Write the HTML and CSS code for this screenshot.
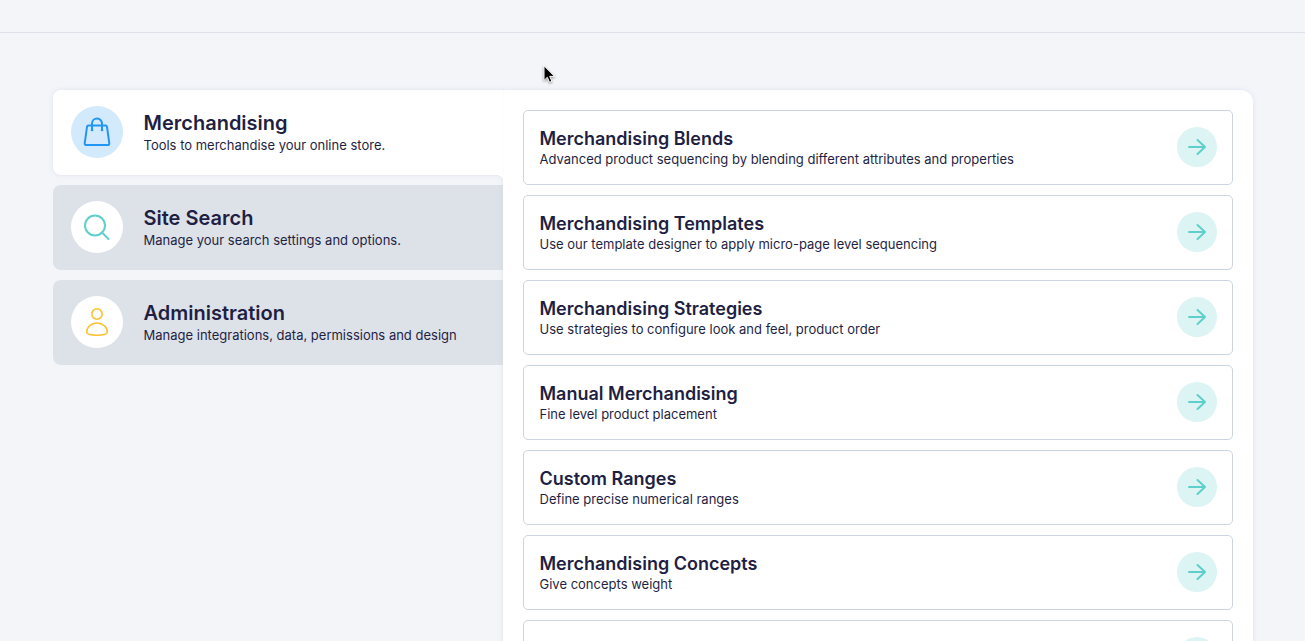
FILE: index.html
```html
<!DOCTYPE html>
<html lang="en">
<head>
  <meta charset="UTF-8">
  <meta name="viewport" content="width=device-width, initial-scale=1.0">
  <title>Merchandising</title>
  <link rel="stylesheet" href="styles.css">
</head>
<body>
  <svg class="sprite" aria-hidden="true">
    <symbol id="arrow" viewBox="0 0 20 20">
      <path d="M2 10h16M10.500 3l7.500 7-7.500 7" />
    </symbol>
  </svg>

  <header class="topbar"></header>

  <main class="container">
    <nav class="tabs">
      <button type="button" class="tab active">
        <span class="tab-icon blue">
          <svg viewBox="0 0 52 52">
            <path d="M17.500 19.500h17a1.500 1.500 0 0 1 1.500 1.300l2.300 16.500a1.500 1.500 0 0 1-1.500 1.700h-21.600a1.500 1.500 0 0 1-1.500-1.700l2.300-16.500a1.500 1.500 0 0 1 1.500-1.300z" />
            <path d="M21 24v-6.500a5 5 0 0 1 10 0v6.500" />
            <circle class="dot" cx="21" cy="24" r="1.300" />
            <circle class="dot" cx="31" cy="24" r="1.300" />
          </svg>
        </span>
        <span class="text">
          <span class="tab-title">Merchandising</span>
          <span class="description">Tools to merchandise your online store.</span>
        </span>
      </button>
      <button type="button" class="tab">
        <span class="tab-icon teal">
          <svg viewBox="0 0 52 52">
            <circle cx="24" cy="24.500" r="10" />
            <path d="M31 31.500l6.500 6.500" />
          </svg>
        </span>
        <span class="text">
          <span class="tab-title">Site Search</span>
          <span class="description">Manage your search settings and options.</span>
        </span>
      </button>
      <button type="button" class="tab">
        <span class="tab-icon yellow">
          <svg viewBox="0 0 52 52">
            <circle cx="26" cy="18" r="5.200" />
            <path d="M26 27c-6 0-10.300 4.200-10.300 9.300 0 2 4 2.900 10.300 2.900s10.300-.9 10.300-2.900c0-5.100-4.300-9.300-10.300-9.300z" />
          </svg>
        </span>
        <span class="text">
          <span class="tab-title">Administration</span>
          <span class="description">Manage integrations, data, permissions and design</span>
        </span>
      </button>
    </nav>

    <section class="panel">
      <a class="card" href="#">
        <span class="text">
          <span class="card-title">Merchandising Blends</span>
          <span class="description">Advanced product sequencing by blending different attributes and properties</span>
        </span>
        <span class="go"><svg><use href="#arrow" /></svg></span>
      </a>
      <a class="card" href="#">
        <span class="text">
          <span class="card-title">Merchandising Templates</span>
          <span class="description">Use our template designer to apply micro-page level sequencing</span>
        </span>
        <span class="go"><svg><use href="#arrow" /></svg></span>
      </a>
      <a class="card" href="#">
        <span class="text">
          <span class="card-title">Merchandising Strategies</span>
          <span class="description">Use strategies to configure look and feel, product order</span>
        </span>
        <span class="go"><svg><use href="#arrow" /></svg></span>
      </a>
      <a class="card" href="#">
        <span class="text">
          <span class="card-title">Manual Merchandising</span>
          <span class="description">Fine level product placement</span>
        </span>
        <span class="go"><svg><use href="#arrow" /></svg></span>
      </a>
      <a class="card" href="#">
        <span class="text">
          <span class="card-title">Custom Ranges</span>
          <span class="description">Define precise numerical ranges</span>
        </span>
        <span class="go"><svg><use href="#arrow" /></svg></span>
      </a>
      <a class="card" href="#">
        <span class="text">
          <span class="card-title">Merchandising Concepts</span>
          <span class="description">Give concepts weight</span>
        </span>
        <span class="go"><svg><use href="#arrow" /></svg></span>
      </a>
      <a class="card" href="#">
        <span class="text"></span>
        <span class="go"><svg><use href="#arrow" /></svg></span>
      </a>
    </section>
  </main>

  <svg class="cursor" viewBox="0 0 12 19" aria-hidden="true">
    <path d="M1 1v14.500l3.300-3.200 2.200 5 2.400-1-2.200-4.900h4.600z" />
  </svg>
</body>
</html>
```

FILE: styles.css
```css
* {
  box-sizing: border-box;
}

body {
  margin: 0;
  height: 100vh;
  overflow: hidden;
  background-color: #f3f5f9;
  color: #1f1f43;
  font-family: Inter, sans-serif;
}

.sprite {
  display: none;
}

svg {
  fill: none;
  stroke: currentColor;
  stroke-width: 2;
  stroke-linecap: round;
  stroke-linejoin: round;
}

.topbar {
  height: 33px;
  border-bottom: 1px solid #dde1e9;
}

.container {
  display: grid;
  grid-template-columns: 3fr 5fr;
  max-width: 1200px;
  margin: 57px auto 0;
}

/* Left tabs */
.tabs {
  display: flex;
  flex-direction: column;
  gap: 10px;
}

.tab {
  display: flex;
  align-items: center;
  gap: 21px;
  height: 85px;
  padding: 16px 18px 17px;
  border: none;
  border-radius: 8px 0 0 8px;
  background-color: #dde2e9;
  color: inherit;
  font-family: inherit;
  text-align: left;
  cursor: pointer;
}

/* overlaps the panel by 1px so no seam shows between them */
.tab.active {
  position: relative;
  z-index: 1;
  margin-right: -1px;
  background-color: #fff;
  box-shadow: 0 0 4px rgba(200, 210, 225, 0.5);
  clip-path: inset(-4px 0 -8px -4px);
}

/* rounded inner corner where the active tab joins the panel */
.tab.active::after {
  content: "";
  position: absolute;
  top: 100%;
  right: 0;
  width: 8px;
  height: 8px;
  background: radial-gradient(circle at 0 100%, transparent 8px, #fff 8px);
}

.tab-icon {
  width: 52px;
  height: 52px;
  border-radius: 50%;
  background-color: #fff;
}

.tab-icon svg {
  display: block;
}

.blue {
  background-color: #d3e9fc;
  color: #2196f3;
}

.blue .dot {
  fill: currentColor;
  stroke: none;
}

.teal {
  color: #5fcfcb;
}

.yellow {
  color: #fdc02f;
}

.yellow svg {
  stroke-width: 1.6;
}

.text {
  display: flex;
  flex-direction: column;
}

.tab-title {
  font-size: 20px;
  font-weight: 600;
  line-height: 26px;
}

.description {
  font-size: 13px;
  line-height: 18px;
}

/* Right panel */
.panel {
  display: flex;
  flex-direction: column;
  gap: 10px;
  padding: 20px;
  background-color: #fff;
  border-radius: 0 12px 0 0;
  box-shadow: 0 0 4px rgba(200, 210, 225, 0.5);
}

.card {
  display: flex;
  align-items: center;
  justify-content: space-between;
  height: 75px;
  padding: 16px 15px 17px 16px;
  border: 1px solid #cbd5e1;
  border-radius: 5px;
  color: inherit;
  text-decoration: none;
}

.card .text {
  padding-top: 2px;
}

.card-title {
  font-size: 18px;
  font-weight: 600;
  line-height: 22px;
}

.go {
  display: flex;
  align-items: center;
  justify-content: center;
  width: 40px;
  height: 40px;
  border-radius: 50%;
  background-color: #dcf4f3;
  color: #5fcfcb;
}

.go svg {
  width: 20px;
  height: 20px;
}

/* Mouse pointer over the page */
.cursor {
  position: absolute;
  top: 65px;
  left: 543px;
  width: 12px;
  height: 19px;
  overflow: visible;
  fill: #000;
  stroke: #fff;
  stroke-width: 1;
  filter: drop-shadow(0 1px 1px rgba(0, 0, 0, 0.4));
}
```
